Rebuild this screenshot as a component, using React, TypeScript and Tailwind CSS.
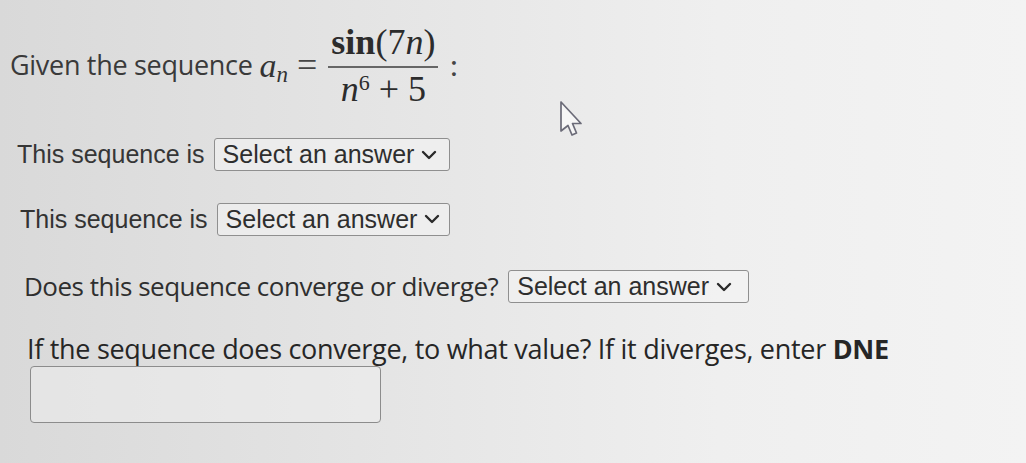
import React from "react";

const sans = { fontFamily: '"Open Sans", "Noto Sans", sans-serif' };

function Chevron() {
  return (
    <svg width="20" height="12" viewBox="0 0 20 12" className="ml-[5px] shrink-0" aria-hidden="true">
      <path d="M4 3 L10 9 L16 3" fill="none" stroke="#2a2a2a" strokeWidth="2.4" strokeLinecap="round" strokeLinejoin="round" />
    </svg>
  );
}

function SelectBox({ w }: { w: string }) {
  return (
    <div
      className={`flex h-[33px] items-center rounded-[3px] border border-[#8f8f8f] bg-[#f4f4f4]/60 pl-[8px] font-['Liberation_Sans',Arial,sans-serif] text-[25px] text-[#2e2e2e] ${w}`}
    >
      <span className="leading-none">Select an answer</span>
      <Chevron />
    </div>
  );
}

export default function App() {
  return (
    <div className="h-[463px] w-[1026px] overflow-hidden bg-[linear-gradient(90deg,#d9d9d9_0%,#e4e4e4_35%,#efefef_70%,#f3f3f3_100%)] text-[#353535]">
      {/* row 1 – the sequence */}
      <div className="flex h-[122px] items-center pl-[10px] pt-[8px]">
        <span className="text-[27px] tracking-[-0.3px] text-[#3a3a3a]" style={sans}>
          Given the sequence
        </span>
        <span className="ml-[7px] font-['Liberation_Serif',serif] text-[34px] italic text-[#333]">
          a<sub className="text-[23px]">n</sub>
        </span>
        <span className="ml-[9px] font-['Liberation_Serif',serif] text-[36px] text-[#444]">=</span>
        <span className="ml-[10px] inline-flex flex-col items-center font-['Liberation_Serif',serif] text-[36px] text-[#2c2c2c]">
          <span className="px-[4px] pb-[5px] leading-[38px]">
            <span className="font-bold">sin</span>(7<i>n</i>)
          </span>
          <span className="h-[2px] w-[110px] bg-[#666]" />
          <span className="px-[4px] pt-[3px] leading-[36px]">
            <i>n</i>
            <sup className="text-[22px]">6</sup> + 5
          </span>
        </span>
        <span className="ml-[10px] font-['Liberation_Serif',serif] text-[32px] text-[#444]">:</span>
        <div className="relative ml-[101px] h-full w-[30px]">
          <svg
            width="26"
            height="38"
            viewBox="0 0 26 38"
            className="absolute left-[0px] top-[92px]"
            aria-hidden="true"
          >
            <path
              d="M2 2 L2 31 L9 25.5 L13 35 L17.5 33 L13.5 23.5 L22 23.5 Z"
              fill="#f6f6f6"
              stroke="#6b6b78"
              strokeWidth="1.7"
              strokeLinejoin="round"
            />
          </svg>
        </div>
      </div>

      {/* row 2 */}
      <div className="mt-[14px] flex items-center pl-[17px] font-['Liberation_Sans',Arial,sans-serif] text-[25px] text-[#363636]">
        <span>This sequence is</span>
        <div className="ml-[9px]">
          <SelectBox w="w-[236px]" />
        </div>
      </div>

      {/* row 3 */}
      <div className="mt-[27px] flex items-center pl-[20px] font-['Liberation_Sans',Arial,sans-serif] text-[25px] text-[#333]">
        <span>This sequence is</span>
        <div className="ml-[9px]">
          <SelectBox w="w-[233px]" />
        </div>
      </div>

      {/* row 4 */}
      <div className="mt-[29px] flex items-center pl-[24px] text-[#2f2f2f]" style={sans}>
        <span className="text-[26px] tracking-[-0.5px]">Does this sequence converge or diverge?</span>
        <div className="ml-[10px]">
          <SelectBox w="w-[241px]" />
        </div>
      </div>

      {/* row 5 */}
      <div className="mt-[28px] pl-[27px] text-[#262626]" style={sans}>
        <div className="text-[27px] leading-[30px] tracking-[-0.3px]">
          If the sequence does converge, to what value? If it diverges, enter <b className="font-bold">DNE</b>
        </div>
        <div className="ml-[3px] mt-[2px] h-[57px] w-[351px] rounded-[4px] border border-[#8c8c8c] bg-[#f0f0f0]/50" />
      </div>
    </div>
  );
}
